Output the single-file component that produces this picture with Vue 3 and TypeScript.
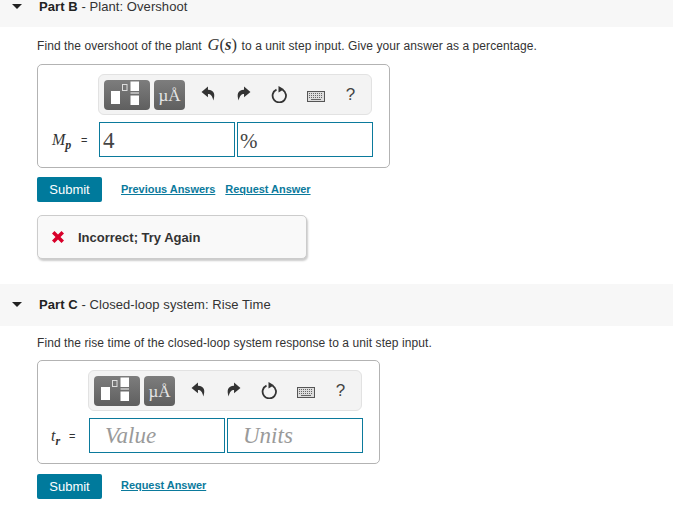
<script setup lang="ts">
interface Part {
  label: string
  title: string
}
const partB: Part = { label: 'Part B', title: 'Plant: Overshoot' }
const partC: Part = { label: 'Part C', title: 'Closed-loop system: Rise Time' }
</script>

<template>
  <div class="page">
    <header class="part-head first">
      <span class="caret"></span>
      <span class="part-title"><b>{{ partB.label }}</b> - {{ partB.title }}</span>
    </header>

    <p class="prompt first-prompt">
      Find the overshoot of the plant
      <span class="math g"><i>G</i>(<i class="bold-s">s</i>)</span>
      to a unit step input. Give your answer as a percentage.
    </p>

    <section class="answer wide">
      <div class="tool-row">
        <div class="toolbar">
          <span class="tbtn templates">
            <svg width="46" height="30" viewBox="0 0 46 30">
              <rect x="7" y="11" width="9" height="13" fill="#fff" />
              <rect x="18.500" y="4.500" width="4.500" height="6" fill="none" stroke="#ddd" stroke-width="1" />
              <rect x="26.500" y="1.500" width="8.500" height="9.500" fill="#fff" />
              <rect x="26.500" y="12.500" width="8.500" height="1" fill="#fff" />
              <rect x="26.500" y="15.500" width="8.500" height="9.500" fill="#fff" />
            </svg>
          </span>
          <span class="tbtn units">µÅ</span>
          <span class="tool t-undo">
            <svg width="15" height="15" viewBox="0 0 14 14"><path d="M6.500 0.500 L0.500 5.500 L6.500 10.500 V7.500 C9 7.500 10.500 9 11.500 13.500 C13.500 8 12.500 3.700 6.500 3.500 Z" fill="#333" /></svg>
          </span>
          <span class="tool t-redo">
            <svg width="15" height="15" viewBox="0 0 14 14"><path d="M7.500 0.500 L13.500 5.500 L7.500 10.500 V7.500 C5 7.500 3.500 9 2.500 13.500 C0.500 8 1.500 3.700 7.500 3.500 Z" fill="#333" /></svg>
          </span>
          <span class="tool t-reset">
            <svg width="17" height="17" viewBox="0 0 17 17"><path d="M5.500 3.600 A6.700 6.700 0 1 0 11.500 3.800" fill="none" stroke="#333" stroke-width="1.800" /><path d="M7.500 0 L13 3.300 L7.500 6.500 Z" fill="#333" /></svg>
          </span>
          <span class="tool t-keys">
            <svg width="18" height="11" viewBox="0 0 18 11"><rect x="0.500" y="0.500" width="17" height="10" fill="#ddd" stroke="#555" /><path d="M2 2.500H16M2 4.500H16M2 6.500H16" stroke="#666" stroke-dasharray="1 1" /><path d="M4 8.500H14" stroke="#666" /></svg>
          </span>
          <span class="tool t-help">?</span>
        </div>
      </div>
      <div class="input-row">
        <span class="var"><i>M</i><sub><i>p</i></sub></span>
        <span class="eq">=</span>
        <span class="field value">4</span>
        <span class="field unit">%</span>
      </div>
    </section>

    <div class="actions first-actions">
      <button class="submit" type="button">Submit</button>
      <a class="link prev">Previous Answers</a>
      <a class="link">Request Answer</a>
    </div>

    <div class="feedback">
      <svg class="cross" width="14" height="14" viewBox="0 0 14 14"><path d="M1 3.500 L3.500 1 L7 4.500 L10.500 1 L13 3.500 L9.500 7 L13 10.500 L10.500 13 L7 9.500 L3.500 13 L1 10.500 L4.500 7 Z" fill="#d8002a" /></svg>
      <span>Incorrect; Try Again</span>
    </div>

    <header class="part-head second">
      <span class="caret"></span>
      <span class="part-title"><b>{{ partC.label }}</b> - {{ partC.title }}</span>
    </header>

    <p class="prompt second-prompt">Find the rise time of the closed-loop system response to a unit step input.</p>

    <section class="answer narrow">
      <div class="tool-row">
        <div class="toolbar">
          <span class="tbtn templates">
            <svg width="46" height="30" viewBox="0 0 46 30">
              <rect x="7" y="11" width="9" height="13" fill="#fff" />
              <rect x="18.500" y="4.500" width="4.500" height="6" fill="none" stroke="#ddd" stroke-width="1" />
              <rect x="26.500" y="1.500" width="8.500" height="9.500" fill="#fff" />
              <rect x="26.500" y="12.500" width="8.500" height="1" fill="#fff" />
              <rect x="26.500" y="15.500" width="8.500" height="9.500" fill="#fff" />
            </svg>
          </span>
          <span class="tbtn units">µÅ</span>
          <span class="tool t-undo">
            <svg width="15" height="15" viewBox="0 0 14 14"><path d="M6.500 0.500 L0.500 5.500 L6.500 10.500 V7.500 C9 7.500 10.500 9 11.500 13.500 C13.500 8 12.500 3.700 6.500 3.500 Z" fill="#333" /></svg>
          </span>
          <span class="tool t-redo">
            <svg width="15" height="15" viewBox="0 0 14 14"><path d="M7.500 0.500 L13.500 5.500 L7.500 10.500 V7.500 C5 7.500 3.500 9 2.500 13.500 C0.500 8 1.500 3.700 7.500 3.500 Z" fill="#333" /></svg>
          </span>
          <span class="tool t-reset">
            <svg width="17" height="17" viewBox="0 0 17 17"><path d="M5.500 3.600 A6.700 6.700 0 1 0 11.500 3.800" fill="none" stroke="#333" stroke-width="1.800" /><path d="M7.500 0 L13 3.300 L7.500 6.500 Z" fill="#333" /></svg>
          </span>
          <span class="tool t-keys">
            <svg width="18" height="11" viewBox="0 0 18 11"><rect x="0.500" y="0.500" width="17" height="10" fill="#ddd" stroke="#555" /><path d="M2 2.500H16M2 4.500H16M2 6.500H16" stroke="#666" stroke-dasharray="1 1" /><path d="M4 8.500H14" stroke="#666" /></svg>
          </span>
          <span class="tool t-help">?</span>
        </div>
      </div>
      <div class="input-row">
        <span class="var tr"><i>t</i><sub><i>r</i></sub></span>
        <span class="eq">=</span>
        <span class="field placeholder">Value</span>
        <span class="field placeholder unitph">Units</span>
      </div>
    </section>

    <div class="actions second-actions">
      <button class="submit" type="button">Submit</button>
      <a class="link prev">Request Answer</a>
    </div>
  </div>
</template>

<style>
html, body { margin: 0; background: #fff; }
</style>

<style scoped>
.page {
  width: 673px;
  height: 510px;
  overflow: hidden;
  font-family: "Liberation Sans", Arial, sans-serif;
  color: #333;
  background: #fff;
}
.part-head {
  display: flex;
  align-items: center;
  background: #f7f7f7;
  font-size: 13px;
  letter-spacing: 0.07px;
  color: #333;
}
.part-head.first { height: 27px; align-items: flex-start; }
.part-head.second { height: 42px; margin-top: 25px; padding-bottom: 2px; box-sizing: border-box; }
.part-head.first .caret { margin-top: 4px; }
.part-head.first .part-title { line-height: 13px; }
.caret {
  width: 0;
  height: 0;
  margin-left: 12px;
  border-left: 5px solid transparent;
  border-right: 5px solid transparent;
  border-top: 5px solid #222;
}
.part-title { margin-left: 17px; }
.part-title b { font-weight: 700; color: #222; }
.prompt {
  margin: 0 0 0 37px;
  font-size: 12px;
  line-height: 16px;
  letter-spacing: 0.08px;
  color: #333;
}
.first-prompt { margin-top: 10px; height: 27px; }
.second-prompt { margin-top: 9px; height: 25px; }
.math { font-family: "Liberation Serif", serif; font-size: 16.5px; margin: 0 1px 0 2.500px; }
.bold-s { font-weight: 700; }
.answer {
  box-sizing: border-box;
  height: 104px;
  margin-left: 37px;
  border: 1px solid #b3b3b3;
  border-radius: 5px;
  padding-top: 9px;
}
.wide { width: 353px; }
.narrow { width: 343px; }
.tool-row { display: flex; }
.wide .tool-row { padding-left: 60px; }
.narrow .tool-row { padding-left: 50px; }
.toolbar {
  box-sizing: border-box;
  width: 274px;
  height: 41px;
  display: flex;
  align-items: center;
  padding-left: 5px;
  background: #f3f3f3;
  border: 1px solid #e2e2e2;
  border-radius: 6px;
}
.tbtn {
  display: flex;
  align-items: center;
  justify-content: center;
  height: 30px;
  border-radius: 4px;
  background: linear-gradient(#7d7d7d, #5f5f5f);
  color: #e6e6e6;
}
.templates { width: 46px; }
.units {
  width: 31px;
  margin-left: 4px;
  font-family: "Liberation Serif", serif;
  font-size: 17px;
  padding-top: 2px;
  box-sizing: border-box;
}
.tool { display: flex; align-items: center; justify-content: center; width: 18px; }
.t-undo { margin-left: 14px; margin-bottom: 2px; }
.t-redo { margin-left: 17px; margin-bottom: 2px; }
.t-reset { margin-left: 18.500px; }
.t-keys { margin-left: 18px; margin-top: 3px; }
.t-help { margin-left: 17px; font-size: 17px; color: #444; }
.input-row {
  display: flex;
  align-items: center;
  height: 35px;
  margin-top: 7px;
}
.var {
  width: 36px;
  margin-left: 14px;
  font-family: "Liberation Serif", serif;
  font-size: 16px;
  color: #333;
}
.var sub { font-size: 12px; line-height: 0; font-weight: 700; }
.var.tr { margin-left: 13px; width: 18px; }
.eq { width: 11px; margin-left: -7px; margin-right: 7px; font-size: 11px; }
.tr + .eq { margin-left: 0; margin-right: 9px; }
.field {
  box-sizing: border-box;
  width: 136px;
  height: 35px;
  margin-right: 2px;
  border: 1px solid #0b7a9c;
  font-family: "Liberation Serif", serif;
  display: flex;
  align-items: center;
}
.value { font-size: 23px; padding: 3px 0 0 3px; color: #444; }
.unit { font-size: 21px; padding: 3px 0 0 2px; color: #444; }
.placeholder {
  font-size: 23px;
  font-style: italic;
  color: #9a9a9a;
  padding-left: 15px;
}
.actions {
  display: flex;
  align-items: center;
  height: 25px;
  padding-left: 37px;
}
.first-actions { margin-top: 9px; }
.second-actions { margin-top: 10px; }
.submit {
  width: 65px;
  height: 25px;
  padding: 0;
  border: 0;
  border-radius: 2px;
  background: #007a9c;
  color: #fff;
  font-family: "Liberation Sans", Arial, sans-serif;
  font-size: 13px;
}
.link {
  font-size: 11px;
  font-weight: 700;
  letter-spacing: -0.04px;
  color: #0b7a9c;
  text-decoration: underline;
  margin-left: 10px;
  padding-bottom: 2px;
}
.link.prev { margin-left: 19px; }
.second-actions .link { padding-bottom: 3px; }
.feedback {
  box-sizing: border-box;
  display: flex;
  align-items: center;
  width: 270px;
  height: 44px;
  margin: 13px 0 0 37px;
  padding-left: 13px;
  gap: 13px;
  background: #f9f9f9;
  border: 1px solid #ccc;
  border-radius: 5px;
  box-shadow: 1px 2px 2px #ccc;
  font-size: 13px;
  font-weight: 700;
  color: #333;
}
.cross { flex: none; }
</style>
